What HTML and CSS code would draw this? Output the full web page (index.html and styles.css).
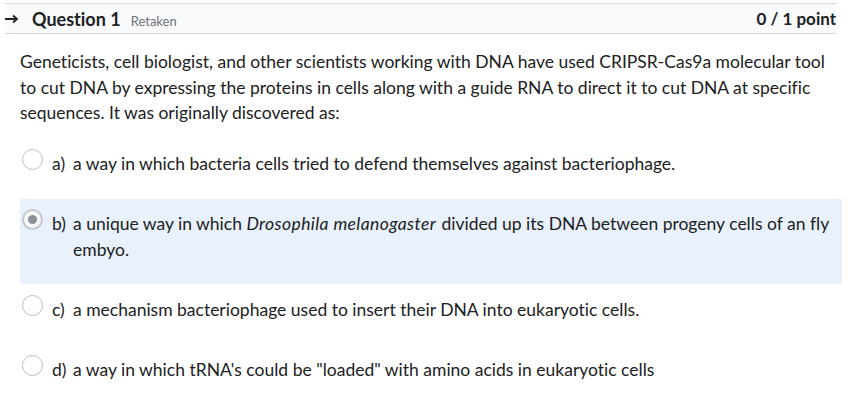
FILE: index.html
```html
<!DOCTYPE html>
<html>
<head>
<meta charset="utf-8">
<link rel="stylesheet" href="styles.css">
</head>
<body>
<div class="page">
  <div class="qhead">
    <div class="qtitle">
      <svg class="arrow" width="14" height="10" viewBox="0 0 14 10"><path d="M0 5H12M8 1.5L12 5L8 8.5" fill="none" stroke="#202122" stroke-width="1.8"/></svg>
      <span class="qname">Question 1</span>
      <span class="qstatus">Retaken</span>
    </div>
    <div class="qscore">0 / 1 point</div>
  </div>
  <div class="qbody">
    <p class="qtext">Geneticists, cell biologist, and other scientists working with DNA have used CRIPSR-Cas9a molecular tool to cut DNA by expressing the proteins in cells along with a guide RNA to direct it to cut DNA at specific sequences. It was originally discovered as:</p>
    <div class="options">
      <div class="opt">
        <span class="radio"></span>
        <span class="letter">a)</span>
        <span class="otext">a way in which bacteria cells tried to defend themselves against bacteriophage.</span>
      </div>
      <div class="opt selected">
        <span class="radio checked"></span>
        <span class="letter">b)</span>
        <span class="otext">a unique way in which <em class="sci">Drosophila melanogaster</em> divided up its DNA between progeny cells of an fly embyo.</span>
      </div>
      <div class="opt">
        <span class="radio"></span>
        <span class="letter">c)</span>
        <span class="otext">a mechanism bacteriophage used to insert their DNA into eukaryotic cells.</span>
      </div>
      <div class="opt">
        <span class="radio"></span>
        <span class="letter">d)</span>
        <span class="otext">a way in which tRNA's could be "loaded" with amino acids in eukaryotic cells</span>
      </div>
    </div>
  </div>
</div>
</body>
</html>
```
FILE: styles.css
```css
* { box-sizing: border-box; }
body {
  margin: 0;
  background: #fff;
  font-family: Lato, "Noto Sans", sans-serif;
  color: #202122;
  font-variant-ligatures: none;
}
.page {
  width: 867px;
  padding: 3px 31px 0 5px;
}
.qhead {
  display: flex;
  justify-content: space-between;
  align-items: center;
  height: 31px;
  border-top: 1px solid #d6d9dd;
  border-bottom: 1px solid #d6d9dd;
  background: #f9fafc;
}
.qtitle {
  display: flex;
  align-items: baseline;
}
.arrow {
  margin-right: 13px;
  align-self: center;
}
.qname {
  font-size: 18px;
  font-weight: 700;
}
.qstatus {
  font-size: 13px;
  color: #6e7376;
  margin-left: 10px;
}
.qscore {
  font-size: 17px;
  font-weight: 700;
}
.qbody {
  padding: 15px 0 0 15px;
  width: 837px;
}
.qtext {
  margin: 0;
  font-size: 17.5px;
  line-height: 25.5px;
}
.options {
  margin-top: 13px;
  display: flex;
  flex-direction: column;
  gap: 1px;
}
.opt {
  display: flex;
  align-items: flex-start;
  padding: 12px 12px 21px 2px;
  font-size: 17.5px;
  line-height: 26px;
}
.opt.selected {
  background: #e8f1fc;
}
.radio {
  flex: none;
  width: 21px;
  height: 21px;
  border-radius: 50%;
  border: 1px solid #b9bdc2;
  background: #fff;
  margin-top: -2px;
  display: flex;
  align-items: center;
  justify-content: center;
}
.radio.checked {
  border: 2px solid #c4c8cc;
  background: #f6f7f8;
}
.radio.checked::after {
  content: "";
  width: 9px;
  height: 9px;
  border-radius: 50%;
  background: #8c9196;
}
.letter {
  flex: none;
  margin-left: 9px;
  width: 21px;
}
.otext {
  flex: 1;
}
.sci {
  font-style: italic;
  letter-spacing: 0.4px;
  padding-right: 1px;
}
```
